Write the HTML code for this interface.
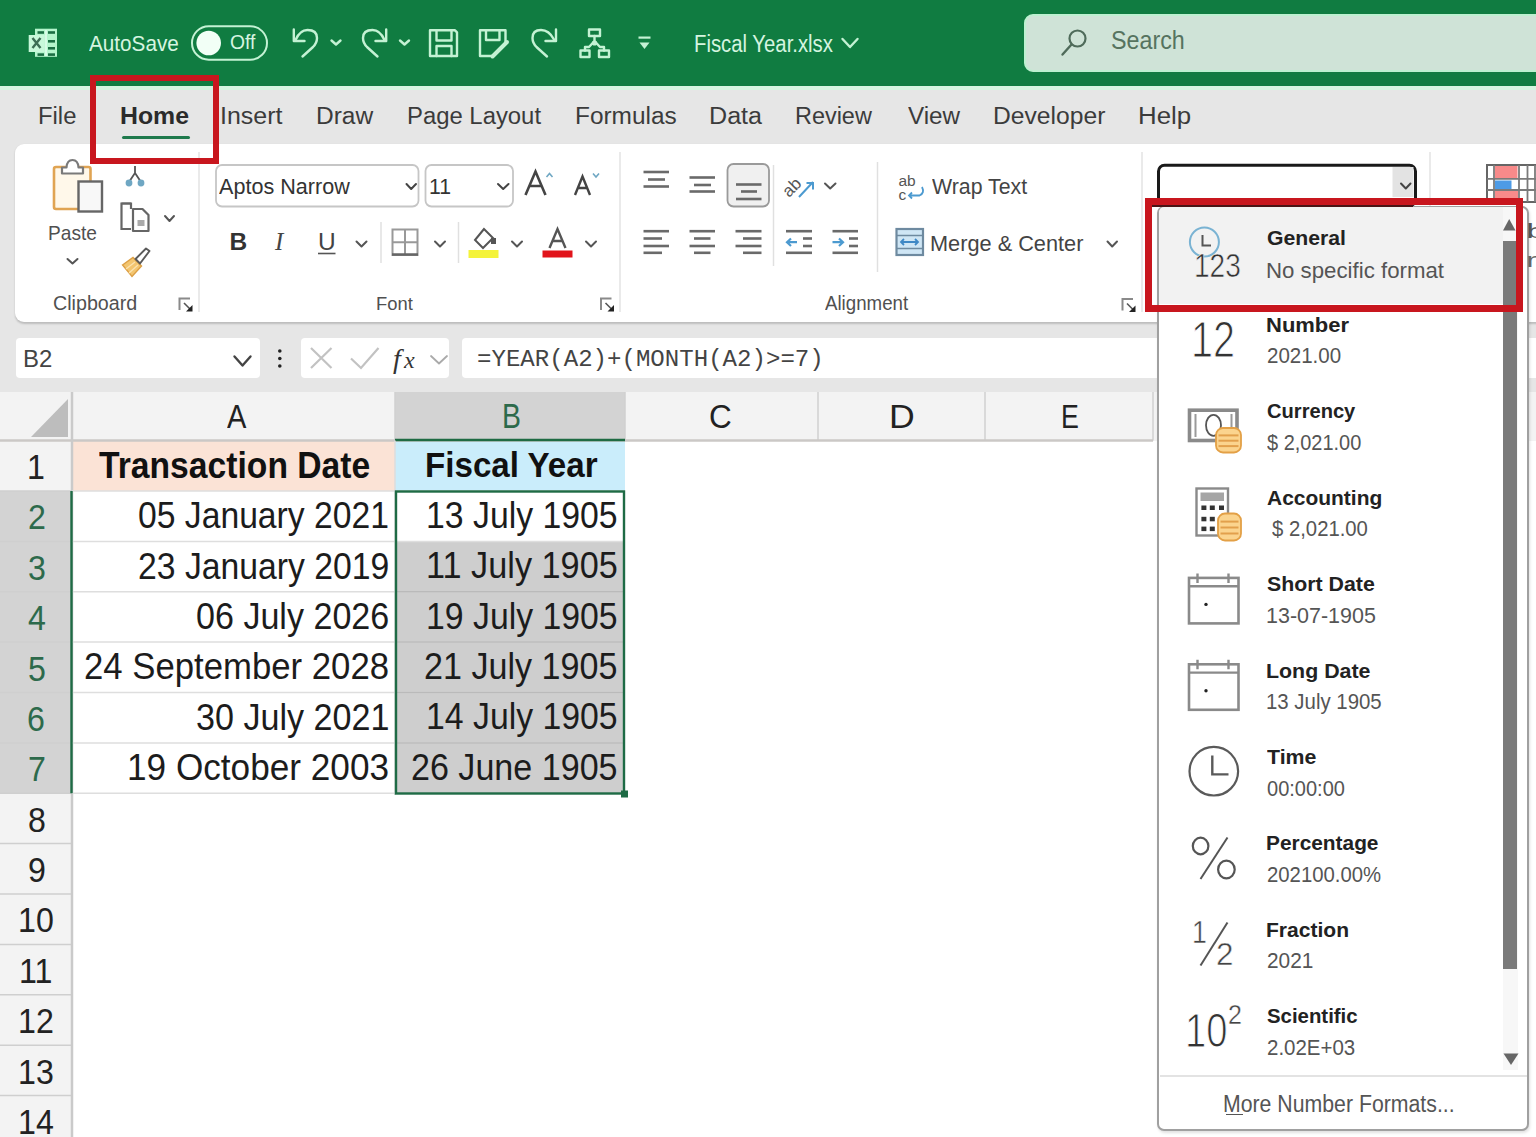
<!DOCTYPE html>
<html><head><meta charset="utf-8"><style>
html,body{margin:0;padding:0;width:1536px;height:1137px;overflow:hidden;background:#fff;font-family:'Liberation Sans',sans-serif}
.b{position:absolute;box-sizing:border-box}
.t{position:absolute;white-space:nowrap;transform-origin:0 0}
svg{position:absolute;overflow:visible}
</style></head><body>
<div class="b" style="left:0.0px;top:0.0px;width:1536.0px;height:86.0px;background:#107c41"></div>
<div class="b" style="left:0.0px;top:85.5px;width:1536.0px;height:4.0px;background:#d5f5e0"></div>
<div class="b" style="left:0.0px;top:89.5px;width:1536.0px;height:302.5px;background:#e6e6e6"></div>
<div class="b" style="left:15.0px;top:143.5px;width:1545.0px;height:178.5px;background:#fff;border-radius:9px;box-shadow:0 1.5px 2px rgba(0,0,0,.18)"></div>
<div class="b" style="left:1023.5px;top:13.5px;width:536.5px;height:58.5px;background:#cfe3d7;border:2.2px solid #bdf0d0;border-radius:9px"></div>
<div class="b" style="left:16.0px;top:338.0px;width:244.0px;height:39.5px;background:#fff;border-radius:4px"></div>
<div class="b" style="left:300.5px;top:338.0px;width:148.5px;height:39.5px;background:#fff;border-radius:4px"></div>
<div class="b" style="left:462.0px;top:338.0px;width:1098.0px;height:39.5px;background:#fff;border-radius:4px"></div>
<div class="b" style="left:0.0px;top:392.0px;width:1536.0px;height:48.5px;background:#f3f3f3"></div>
<div class="b" style="left:0.0px;top:440.5px;width:1536.0px;height:696.5px;background:#fff"></div>
<div class="b" style="left:0.0px;top:440.5px;width:72.0px;height:696.5px;background:#f3f3f3"></div>
<div class="b" style="left:0.0px;top:491.0px;width:71.0px;height:302.3px;background:#d3d3d3"></div>
<div class="b" style="left:395.0px;top:392.0px;width:230.0px;height:48.5px;background:#d3d3d3"></div>
<div class="b" style="left:72.0px;top:440.6px;width:323.0px;height:50.4px;background:#fbe3d6"></div>
<div class="b" style="left:395.0px;top:440.6px;width:230.0px;height:50.4px;background:#caedfb"></div>
<div class="b" style="left:395.0px;top:541.4px;width:230.0px;height:251.9px;background:#cecece"></div>
<svg width="1536" height="1137" viewBox="0 0 1536 1137" style="left:0;top:0"><line x1="72" y1="392" x2="72" y2="440.5" stroke="#d0d0d0" stroke-width="1.5"/><line x1="395" y1="392" x2="395" y2="440.5" stroke="#d0d0d0" stroke-width="1.5"/><line x1="625" y1="392" x2="625" y2="440.5" stroke="#d0d0d0" stroke-width="1.5"/><line x1="818" y1="392" x2="818" y2="440.5" stroke="#d0d0d0" stroke-width="1.5"/><line x1="985" y1="392" x2="985" y2="440.5" stroke="#d0d0d0" stroke-width="1.5"/><line x1="1153" y1="392" x2="1153" y2="440.5" stroke="#d0d0d0" stroke-width="1.5"/><line x1="0" y1="440.5" x2="1153" y2="440.5" stroke="#cbc8c6" stroke-width="2.5"/><line x1="395" y1="440" x2="625" y2="440" stroke="#1f6b43" stroke-width="2.5"/><line x1="0" y1="491.0" x2="72" y2="491.0" stroke="#cfcfcf" stroke-width="1.5"/><line x1="0" y1="541.4" x2="72" y2="541.4" stroke="#cfcfcf" stroke-width="1.5"/><line x1="0" y1="591.7" x2="72" y2="591.7" stroke="#cfcfcf" stroke-width="1.5"/><line x1="0" y1="642.1" x2="72" y2="642.1" stroke="#cfcfcf" stroke-width="1.5"/><line x1="0" y1="692.5" x2="72" y2="692.5" stroke="#cfcfcf" stroke-width="1.5"/><line x1="0" y1="742.9" x2="72" y2="742.9" stroke="#cfcfcf" stroke-width="1.5"/><line x1="0" y1="793.3" x2="72" y2="793.3" stroke="#cfcfcf" stroke-width="1.5"/><line x1="0" y1="843.6" x2="72" y2="843.6" stroke="#cfcfcf" stroke-width="1.5"/><line x1="0" y1="894.0" x2="72" y2="894.0" stroke="#cfcfcf" stroke-width="1.5"/><line x1="0" y1="944.4" x2="72" y2="944.4" stroke="#cfcfcf" stroke-width="1.5"/><line x1="0" y1="994.8" x2="72" y2="994.8" stroke="#cfcfcf" stroke-width="1.5"/><line x1="0" y1="1045.2" x2="72" y2="1045.2" stroke="#cfcfcf" stroke-width="1.5"/><line x1="0" y1="1095.5" x2="72" y2="1095.5" stroke="#cfcfcf" stroke-width="1.5"/><line x1="0" y1="1145.9" x2="72" y2="1145.9" stroke="#cfcfcf" stroke-width="1.5"/><line x1="72" y1="392" x2="72" y2="1137" stroke="#cacaca" stroke-width="2.5"/><line x1="72" y1="491.0" x2="625" y2="491.0" stroke="#dedede" stroke-width="1.5"/><line x1="72" y1="541.4" x2="625" y2="541.4" stroke="#dedede" stroke-width="1.5"/><line x1="72" y1="591.7" x2="625" y2="591.7" stroke="#dedede" stroke-width="1.5"/><line x1="72" y1="642.1" x2="625" y2="642.1" stroke="#dedede" stroke-width="1.5"/><line x1="72" y1="692.5" x2="625" y2="692.5" stroke="#dedede" stroke-width="1.5"/><line x1="72" y1="742.9" x2="625" y2="742.9" stroke="#dedede" stroke-width="1.5"/><line x1="72" y1="793.3" x2="625" y2="793.3" stroke="#dedede" stroke-width="1.5"/><line x1="395" y1="440.5" x2="395" y2="795" stroke="#dcdcdc" stroke-width="1.5"/><line x1="396" y1="591.7" x2="624" y2="591.7" stroke="#bababa" stroke-width="1.5"/><line x1="396" y1="642.1" x2="624" y2="642.1" stroke="#bababa" stroke-width="1.5"/><line x1="396" y1="692.5" x2="624" y2="692.5" stroke="#bababa" stroke-width="1.5"/><line x1="396" y1="742.9" x2="624" y2="742.9" stroke="#bababa" stroke-width="1.5"/><line x1="396" y1="793.3" x2="624" y2="793.3" stroke="#bababa" stroke-width="1.5"/><rect x="396" y="491.5" width="228" height="302" fill="none" stroke="#1e6b45" stroke-width="2.4"/><rect x="621" y="790.5" width="7" height="7" fill="#1e6b45"/><line x1="71.5" y1="491.0" x2="71.5" y2="793.3" stroke="#1e6b45" stroke-width="2.4"/><polygon points="68,399 68,437 31,437" fill="#bdbdbd"/></svg>
<svg width="1536" height="1137" viewBox="0 0 1536 1137" style="left:0;top:0"><rect x="35" y="28.7" width="22" height="28.1" fill="#b4f5cc"/><rect x="37.5" y="31.2" width="6.5" height="2.6" fill="#1b6e43"/><rect x="48" y="31.2" width="7" height="2.6" fill="#1b6e43"/><rect x="37.5" y="40" width="6.5" height="2.6" fill="#1b6e43"/><rect x="48" y="40" width="7" height="2.6" fill="#1b6e43"/><rect x="37.5" y="47" width="6.5" height="2.6" fill="#1b6e43"/><rect x="48" y="47" width="7" height="2.6" fill="#1b6e43"/><rect x="37.5" y="53.3" width="6.5" height="2.6" fill="#1b6e43"/><rect x="48" y="53.3" width="7" height="2.6" fill="#1b6e43"/><rect x="45" y="30" width="2" height="26" fill="#d8fbe6"/><rect x="28.7" y="35" width="16" height="17" fill="#c8f8da"/><path d="M32.5,38 L40.5,48 M40.5,38 L32.5,48" stroke="#3d6e55" stroke-width="2.4"/><rect x="192" y="26.2" width="75" height="33.5" rx="16.75" fill="none" stroke="#c4f2d4" stroke-width="2"/><circle cx="208.7" cy="43" r="12.3" fill="#f2fff6"/><path d="M293.8,29.5 V41 H304.5" fill="none" stroke="#c4f2d4" stroke-width="2.4" stroke-linecap="round" stroke-linejoin="round"/><path d="M295.5,40 Q300,30 307.5,30 Q317,30 317,38 Q317,43 313,47 L302.5,56.5" fill="none" stroke="#c4f2d4" stroke-width="2.4" stroke-linecap="round" stroke-linejoin="round"/><path d="M331.5,40.5 L336,44.5 L340.5,40.5" fill="none" stroke="#c4f2d4" stroke-width="2.4" stroke-linecap="round" stroke-linejoin="round" stroke-width="2"/><path d="M386.2,29.5 V41 H375.5" fill="none" stroke="#c4f2d4" stroke-width="2.4" stroke-linecap="round" stroke-linejoin="round"/><path d="M384.5,40 Q380,30 372.5,30 Q363,30 363,38 Q363,43 367,47 L377.5,56.5" fill="none" stroke="#c4f2d4" stroke-width="2.4" stroke-linecap="round" stroke-linejoin="round"/><path d="M400,40.5 L404.5,44.5 L409,40.5" fill="none" stroke="#c4f2d4" stroke-width="2.4" stroke-linecap="round" stroke-linejoin="round" stroke-width="2"/><path d="M430,30.3 H455 L457,32.3 V56 H430 Z" fill="none" stroke="#c4f2d4" stroke-width="2.4" stroke-linecap="round" stroke-linejoin="round"/><path d="M436.5,30.3 V40.5 H451.5 V30.3 M436.5,56 V46 H451.5 V56" fill="none" stroke="#c4f2d4" stroke-width="2.4" stroke-linecap="round" stroke-linejoin="round"/><path d="M493,56 H480 V30.3 H505.5 V42" fill="none" stroke="#c4f2d4" stroke-width="2.4" stroke-linecap="round" stroke-linejoin="round"/><path d="M486,30.3 V40 H499.5 V30.3" fill="none" stroke="#c4f2d4" stroke-width="2.4" stroke-linecap="round" stroke-linejoin="round"/><path d="M492.5,56.5 L507,42" stroke="#c4f2d4" stroke-width="4" stroke-linecap="round"/><path d="M556,29.5 V41 H545.5" fill="none" stroke="#c4f2d4" stroke-width="2.4" stroke-linecap="round" stroke-linejoin="round"/><path d="M554,39.5 Q549,30 541,30 Q532.5,30 532.5,38 Q532.5,43 536.5,47 L547,56.5" fill="none" stroke="#c4f2d4" stroke-width="2.4" stroke-linecap="round" stroke-linejoin="round"/><rect x="589" y="29.5" width="11" height="6.5" fill="none" stroke="#c4f2d4" stroke-width="2.4" stroke-linecap="round" stroke-linejoin="round" stroke-width="2.2"/><rect x="580.5" y="50.5" width="9" height="6.5" fill="none" stroke="#c4f2d4" stroke-width="2.4" stroke-linecap="round" stroke-linejoin="round" stroke-width="2.2"/><rect x="599" y="50.5" width="10" height="6.5" fill="none" stroke="#c4f2d4" stroke-width="2.4" stroke-linecap="round" stroke-linejoin="round" stroke-width="2.2"/><path d="M594.5,36 V41 M594.5,41 L589,47 H585 V50.5 M594.5,41 L600,47 H604 V50.5" fill="none" stroke="#c4f2d4" stroke-width="2.4" stroke-linecap="round" stroke-linejoin="round" stroke-width="2.2"/><circle cx="594.5" cy="43" r="2.6" fill="#c4f2d4"/><path d="M638.5,37.6 H650.5" stroke="#c4f2d4" stroke-width="2.2"/><path d="M639.5,42.5 L644.5,49 L649.5,42.5 Z" fill="#c4f2d4"/><path d="M842.5,39 L850,47 L857.5,39" fill="none" stroke="#c4f2d4" stroke-width="2.4" stroke-linecap="round" stroke-linejoin="round" stroke-width="2.2"/><circle cx="1077.5" cy="38.5" r="8" fill="none" stroke="#4f6b5a" stroke-width="2.2"/><path d="M1071.5,44.5 L1062.5,54.5" stroke="#4f6b5a" stroke-width="2.4" stroke-linecap="round"/><line x1="199" y1="152" x2="199" y2="312" stroke="#e3e3e3" stroke-width="1.5"/><line x1="620" y1="152" x2="620" y2="312" stroke="#e3e3e3" stroke-width="1.5"/><line x1="1142" y1="152" x2="1142" y2="312" stroke="#e3e3e3" stroke-width="1.5"/><line x1="1430" y1="152" x2="1430" y2="312" stroke="#e3e3e3" stroke-width="1.5"/><line x1="381" y1="222" x2="381" y2="263" stroke="#e0e0e0" stroke-width="1.5"/><line x1="458.5" y1="222" x2="458.5" y2="263" stroke="#e0e0e0" stroke-width="1.5"/><line x1="773.5" y1="165" x2="773.5" y2="266" stroke="#e0e0e0" stroke-width="1.5"/><line x1="877.5" y1="162" x2="877.5" y2="272" stroke="#e0e0e0" stroke-width="1.5"/><rect x="54" y="167" width="36.5" height="42" rx="2" fill="#fff8ea" stroke="#e0a453" stroke-width="2.6"/><path d="M62,173.5 V167.5 H66.5 Q67,160 72.5,160 Q78,160 78.5,167.5 H83 V173.5 Z" fill="#fff" stroke="#7a7a7a" stroke-width="2.2" stroke-linejoin="round"/><rect x="78.5" y="181.5" width="23.5" height="30" fill="#f8f8f8" stroke="#666" stroke-width="2.4"/><path d="M67.5,259.0 L72.5,263.5 L77.5,259.0" fill="none" stroke="#555" stroke-width="2" stroke-linecap="round" stroke-linejoin="round"/><path d="M135,166 V173 L129,182 M135,173 L141,182" stroke="#555" stroke-width="1.8" fill="none"/><circle cx="129" cy="183" r="3.4" fill="#6fa7c3"/><circle cx="141" cy="183" r="3.4" fill="#6fa7c3"/><path d="M131,229 H121.5 V203.5 H131" fill="none" stroke="#666" stroke-width="2.2"/><path d="M121.5,203.5 H131 V209" fill="none" stroke="#666" stroke-width="2.2"/><path d="M133,209 H142.5 L148.5,215 V231 H133 Z" fill="#fff" stroke="#666" stroke-width="2.2" stroke-linejoin="round"/><rect x="137.5" y="220" width="7" height="6" fill="#aaa"/><path d="M165.0,216.0 L169.5,221.0 L174.0,216.0" fill="none" stroke="#555" stroke-width="2" stroke-linecap="round" stroke-linejoin="round"/><path d="M122.5,265 L133,257.5 L141.5,266 L132,276.5 Z" fill="#f3c56f" stroke="#dc9f45" stroke-width="1.4"/><path d="M126,269 L135,262 M129,273 L138,265" stroke="#fbe3b0" stroke-width="1.3"/><path d="M135.5,259 L140,263.5 L149.5,251 L146,248.5 Z" fill="#fff" stroke="#5a5a5a" stroke-width="1.9" stroke-linejoin="round"/><path d="M179.5,310.0 V298.5 H190.0" stroke="#8a8a8a" stroke-width="2" fill="none"/><path d="M184.0,303.0 L190.5,309.5" stroke="#555" stroke-width="1.6" fill="none"/><path d="M186.0,311.5 H192.5 V305.0 Z" fill="#222"/><rect x="216" y="165" width="202.5" height="41.5" rx="6" fill="#fff" stroke="#c6c6c6" stroke-width="1.8"/><path d="M406.5,184.0 L411.2,189.0 L416.0,184.0" fill="none" stroke="#444" stroke-width="2" stroke-linecap="round" stroke-linejoin="round"/><rect x="425.5" y="165" width="87.5" height="41.5" rx="6" fill="#fff" stroke="#c6c6c6" stroke-width="1.8"/><path d="M498.0,184.0 L503.2,189.0 L508.5,184.0" fill="none" stroke="#444" stroke-width="2" stroke-linecap="round" stroke-linejoin="round"/><path d="M525.5,195 L535.5,171.5 L545.5,195 M529.5,186 H541.5" fill="none" stroke="#444" stroke-width="2.6"/><path d="M546.5,177 L549.5,173.5 L552.5,177" fill="none" stroke="#6fa7c3" stroke-width="1.6"/><path d="M575,195 L582.5,176.5 L590,195 M578,188 H587" fill="none" stroke="#444" stroke-width="2.4"/><path d="M593,173.5 L596,177 L599,173.5" fill="none" stroke="#6fa7c3" stroke-width="1.6"/><text x="229.5" y="249.5" font-family="Liberation Sans" font-weight="700" font-size="24.5" fill="#333">B</text><text x="275" y="249.5" font-family="Liberation Serif" font-style="italic" font-size="25" fill="#444">I</text><text x="318" y="249.5" font-family="Liberation Sans" font-size="24.5" fill="#444">U</text><line x1="318" y1="253.5" x2="335.5" y2="253.5" stroke="#555" stroke-width="1.6"/><path d="M356.5,241.5 L361.5,246.5 L366.5,241.5" fill="none" stroke="#555" stroke-width="2" stroke-linecap="round" stroke-linejoin="round"/><rect x="392.5" y="229.5" width="25" height="25.5" fill="none" stroke="#999" stroke-width="2"/><path d="M405,229.5 V255 M392.5,242.2 H417.5" stroke="#999" stroke-width="2"/><line x1="392" y1="254.5" x2="418" y2="254.5" stroke="#666" stroke-width="2.5"/><path d="M435.0,241.5 L440.0,246.5 L445.0,241.5" fill="none" stroke="#555" stroke-width="2" stroke-linecap="round" stroke-linejoin="round"/><path d="M484,229 L475,240 L483,248 L493,238 Z" fill="#fff" stroke="#555" stroke-width="2"/><rect x="491" y="238" width="5" height="6" fill="#555"/><rect x="468.5" y="250" width="30" height="8" fill="#f4f33a"/><path d="M512.0,241.5 L517.0,246.5 L522.0,241.5" fill="none" stroke="#555" stroke-width="2" stroke-linecap="round" stroke-linejoin="round"/><path d="M549.5,248 L557.5,229 L565.5,248 M552.5,241 H562.5" fill="none" stroke="#555" stroke-width="2.4"/><rect x="542.5" y="250.5" width="30" height="7" fill="#e1141b"/><path d="M586.0,241.5 L591.0,246.5 L596.0,241.5" fill="none" stroke="#555" stroke-width="2" stroke-linecap="round" stroke-linejoin="round"/><path d="M601.0,310.0 V298.5 H611.5" stroke="#8a8a8a" stroke-width="2" fill="none"/><path d="M605.5,303.0 L612.0,309.5" stroke="#555" stroke-width="1.6" fill="none"/><path d="M607.5,311.5 H614.0 V305.0 Z" fill="#222"/><line x1="643.5" y1="172.0" x2="669.0" y2="172.0" stroke="#6a6a6a" stroke-width="2.6"/><line x1="648.0" y1="179.5" x2="665.0" y2="179.5" stroke="#6a6a6a" stroke-width="2.6"/><line x1="643.5" y1="186.5" x2="669.0" y2="186.5" stroke="#6a6a6a" stroke-width="2.6"/><line x1="689.5" y1="177.5" x2="715.0" y2="177.5" stroke="#6a6a6a" stroke-width="2.6"/><line x1="694.0" y1="185.0" x2="711.0" y2="185.0" stroke="#6a6a6a" stroke-width="2.6"/><line x1="689.5" y1="191.5" x2="715.0" y2="191.5" stroke="#6a6a6a" stroke-width="2.6"/><rect x="727.5" y="164" width="41.5" height="42.5" rx="6" fill="#f0f0f0" stroke="#9a9a9a" stroke-width="1.8"/><line x1="736.0" y1="184.5" x2="761.5" y2="184.5" stroke="#6a6a6a" stroke-width="2.6"/><line x1="741.0" y1="191.5" x2="757.0" y2="191.5" stroke="#6a6a6a" stroke-width="2.6"/><line x1="736.0" y1="199.0" x2="761.5" y2="199.0" stroke="#6a6a6a" stroke-width="2.6"/><line x1="643.5" y1="231.2" x2="669.0" y2="231.2" stroke="#6a6a6a" stroke-width="2.6"/><line x1="643.5" y1="238.5" x2="662.0" y2="238.5" stroke="#6a6a6a" stroke-width="2.6"/><line x1="643.5" y1="246.0" x2="669.0" y2="246.0" stroke="#6a6a6a" stroke-width="2.6"/><line x1="643.5" y1="252.8" x2="662.0" y2="252.8" stroke="#6a6a6a" stroke-width="2.6"/><line x1="689.5" y1="231.2" x2="715.0" y2="231.2" stroke="#6a6a6a" stroke-width="2.6"/><line x1="694.0" y1="238.5" x2="710.5" y2="238.5" stroke="#6a6a6a" stroke-width="2.6"/><line x1="689.5" y1="246.0" x2="715.0" y2="246.0" stroke="#6a6a6a" stroke-width="2.6"/><line x1="694.0" y1="252.8" x2="710.5" y2="252.8" stroke="#6a6a6a" stroke-width="2.6"/><line x1="735.5" y1="231.2" x2="761.5" y2="231.2" stroke="#6a6a6a" stroke-width="2.6"/><line x1="743.0" y1="238.5" x2="761.5" y2="238.5" stroke="#6a6a6a" stroke-width="2.6"/><line x1="735.5" y1="246.0" x2="761.5" y2="246.0" stroke="#6a6a6a" stroke-width="2.6"/><line x1="743.0" y1="252.8" x2="761.5" y2="252.8" stroke="#6a6a6a" stroke-width="2.6"/><line x1="786.0" y1="231.2" x2="812.0" y2="231.2" stroke="#6a6a6a" stroke-width="2.6"/><line x1="803.0" y1="238.5" x2="812.0" y2="238.5" stroke="#6a6a6a" stroke-width="2.6"/><line x1="803.0" y1="246.0" x2="812.0" y2="246.0" stroke="#6a6a6a" stroke-width="2.6"/><line x1="786.0" y1="252.8" x2="812.0" y2="252.8" stroke="#6a6a6a" stroke-width="2.6"/><path d="M787,242.2 H797 M791,238.5 L787,242.2 L791,246" stroke="#4c9ad0" stroke-width="2.2" fill="none"/><line x1="832.5" y1="231.2" x2="858.0" y2="231.2" stroke="#6a6a6a" stroke-width="2.6"/><line x1="849.0" y1="238.5" x2="858.0" y2="238.5" stroke="#6a6a6a" stroke-width="2.6"/><line x1="849.0" y1="246.0" x2="858.0" y2="246.0" stroke="#6a6a6a" stroke-width="2.6"/><line x1="832.5" y1="252.8" x2="858.0" y2="252.8" stroke="#6a6a6a" stroke-width="2.6"/><path d="M832.5,242.2 H843 M839,238.5 L843,242.2 L839,246" stroke="#4c9ad0" stroke-width="2.2" fill="none"/><text x="0" y="0" transform="translate(789,198) rotate(-45)" font-family="Liberation Sans" font-size="17" fill="#555">ab</text><path d="M799,197 L813,182 M806.5,183 H813 V189.5" stroke="#4c9ad0" stroke-width="2" fill="none"/><path d="M825.0,183.5 L830.2,188.5 L835.5,183.5" fill="none" stroke="#555" stroke-width="2" stroke-linecap="round" stroke-linejoin="round"/><text x="898.5" y="186" font-family="Liberation Sans" font-size="15.5" fill="#555">ab</text><text x="898.5" y="199.5" font-family="Liberation Sans" font-size="15.5" fill="#555">c</text><path d="M922,187 Q925,193 919.5,195.5 H909 M912,192.5 L909,195.5 L912,198.5" stroke="#4c9ad0" stroke-width="1.8" fill="none"/><rect x="896.5" y="229" width="26.5" height="26" fill="#cfe6f5" stroke="#6e8aa0" stroke-width="2.2"/><path d="M896.5,235.5 H923 M896.5,248.5 H923" stroke="#6e8aa0" stroke-width="1.6"/><path d="M901,242 H918 M904,239 L901,242 L904,245 M915,239 L918,242 L915,245" stroke="#3f88c5" stroke-width="1.8" fill="none"/><path d="M1107.5,241.5 L1112.2,246.5 L1117.0,241.5" fill="none" stroke="#555" stroke-width="2" stroke-linecap="round" stroke-linejoin="round"/><path d="M1122.5,310.5 V299.0 H1133.0" stroke="#8a8a8a" stroke-width="2" fill="none"/><path d="M1127.0,303.5 L1133.5,310.0" stroke="#555" stroke-width="1.6" fill="none"/><path d="M1129.0,312.0 H1135.5 V305.5 Z" fill="#222"/><rect x="1158.5" y="165.2" width="257" height="40.5" rx="6" fill="#fff" stroke="#1a1a1a" stroke-width="3"/><rect x="1392.5" y="167" width="21" height="30" fill="#e3e3e3"/><path d="M1401.0,183.5 L1405.8,188.5 L1410.5,183.5" fill="none" stroke="#444" stroke-width="2" stroke-linecap="round" stroke-linejoin="round"/><rect x="1487" y="165" width="60" height="37" fill="#fff" stroke="#666" stroke-width="2"/><rect x="1495" y="166" width="22.5" height="12.5" fill="#f88a8a"/><rect x="1495" y="180.5" width="16.5" height="9" fill="#4d9be6"/><rect x="1495" y="191" width="23" height="11" fill="#f88a8a"/><path d="M1487,178.8 H1536 M1487,190 H1536 M1494,165 V202 M1519,165 V202 M1527.5,165 V202 M1535,165 V202" stroke="#7a7a7a" stroke-width="1.8"/><path d="M234.5,356.5 L242.5,365.5 L250.5,356.5" fill="none" stroke="#444" stroke-width="2.4" stroke-linecap="round" stroke-linejoin="round"/><circle cx="279.8" cy="351" r="1.8" fill="#222"/><circle cx="279.8" cy="358.5" r="1.8" fill="#222"/><circle cx="279.8" cy="366" r="1.8" fill="#222"/><path d="M311,348 L331.5,368 M331.5,348 L311,368" stroke="#c2c2c2" stroke-width="2.2"/><path d="M351,358.5 L361,368 L378.5,348" stroke="#c2c2c2" stroke-width="2.2" fill="none"/><text x="393" y="368" font-family="Liberation Serif" font-style="italic" font-size="28" fill="#333">f</text><text x="404" y="368" font-family="Liberation Serif" font-style="italic" font-size="24" fill="#333">x</text><path d="M431.0,356.0 L439.0,363.5 L447.0,356.0" fill="none" stroke="#aaa" stroke-width="1.8" stroke-linecap="round" stroke-linejoin="round"/></svg>
<div class="t" style="left:88.50px;top:32.75px;font-size:22.03px;line-height:22.03px;font-family:'Liberation Sans', sans-serif;font-weight:400;color:#d6f5e0;transform:scaleX(0.9407);">AutoSave</div>
<div class="t" style="left:229.83px;top:32.89px;font-size:19.86px;line-height:19.86px;font-family:'Liberation Sans', sans-serif;font-weight:400;color:#d6f5e0;transform:scaleX(0.9716);">Off</div>
<div class="t" style="left:693.57px;top:31.67px;font-size:24.49px;line-height:24.49px;font-family:'Liberation Sans', sans-serif;font-weight:400;color:#d6f5e0;transform:scaleX(0.8299);">Fiscal Year.xlsx</div>
<div class="t" style="left:1110.55px;top:28.23px;font-size:25.71px;line-height:25.71px;font-family:'Liberation Sans', sans-serif;font-weight:400;color:#56735f;transform:scaleX(0.9051);">Search</div>
<div class="t" style="left:37.69px;top:103.67px;font-size:24.49px;line-height:24.49px;font-family:'Liberation Sans', sans-serif;font-weight:400;color:#3b3b3b;transform:scaleX(0.9733);">File</div>
<div class="t" style="left:219.75px;top:103.67px;font-size:24.49px;line-height:24.49px;font-family:'Liberation Sans', sans-serif;font-weight:400;color:#3b3b3b;transform:scaleX(1.0186);">Insert</div>
<div class="t" style="left:315.54px;top:103.67px;font-size:24.49px;line-height:24.49px;font-family:'Liberation Sans', sans-serif;font-weight:400;color:#3b3b3b;transform:scaleX(1.0012);">Draw</div>
<div class="t" style="left:407.09px;top:103.67px;font-size:24.49px;line-height:24.49px;font-family:'Liberation Sans', sans-serif;font-weight:400;color:#3b3b3b;transform:scaleX(0.9746);">Page Layout</div>
<div class="t" style="left:575.05px;top:103.67px;font-size:24.49px;line-height:24.49px;font-family:'Liberation Sans', sans-serif;font-weight:400;color:#3b3b3b;transform:scaleX(0.9968);">Formulas</div>
<div class="t" style="left:708.99px;top:103.67px;font-size:24.49px;line-height:24.49px;font-family:'Liberation Sans', sans-serif;font-weight:400;color:#3b3b3b;transform:scaleX(1.0257);">Data</div>
<div class="t" style="left:795.12px;top:103.67px;font-size:24.49px;line-height:24.49px;font-family:'Liberation Sans', sans-serif;font-weight:400;color:#3b3b3b;transform:scaleX(0.9569);">Review</div>
<div class="t" style="left:907.88px;top:103.67px;font-size:24.49px;line-height:24.49px;font-family:'Liberation Sans', sans-serif;font-weight:400;color:#3b3b3b;transform:scaleX(0.9898);">View</div>
<div class="t" style="left:993.03px;top:103.67px;font-size:24.49px;line-height:24.49px;font-family:'Liberation Sans', sans-serif;font-weight:400;color:#3b3b3b;transform:scaleX(1.0070);">Developer</div>
<div class="t" style="left:1137.93px;top:103.67px;font-size:24.49px;line-height:24.49px;font-family:'Liberation Sans', sans-serif;font-weight:400;color:#3b3b3b;transform:scaleX(1.0550);">Help</div>
<div class="t" style="left:120.38px;top:103.62px;font-size:24.78px;line-height:24.78px;font-family:'Liberation Sans', sans-serif;font-weight:700;color:#2b2b2b;transform:scaleX(1.0031);">Home</div>
<div class="t" style="left:48.47px;top:223.96px;font-size:19.42px;line-height:19.42px;font-family:'Liberation Sans', sans-serif;font-weight:400;color:#505050;transform:scaleX(0.9854);">Paste</div>
<div class="t" style="left:53.02px;top:294.37px;font-size:19.29px;line-height:19.29px;font-family:'Liberation Sans', sans-serif;font-weight:400;color:#505050;transform:scaleX(1.0209);">Clipboard</div>
<div class="t" style="left:219.40px;top:175.60px;font-size:21.74px;line-height:21.74px;font-family:'Liberation Sans', sans-serif;font-weight:400;color:#333;transform:scaleX(0.9936);">Aptos Narrow</div>
<div class="t" style="left:429.41px;top:175.60px;font-size:21.74px;line-height:21.74px;font-family:'Liberation Sans', sans-serif;font-weight:400;color:#333;transform:scaleX(0.9753);">11</div>
<div class="t" style="left:375.73px;top:295.10px;font-size:18.55px;line-height:18.55px;font-family:'Liberation Sans', sans-serif;font-weight:400;color:#505050;transform:scaleX(0.9909);">Font</div>
<div class="t" style="left:825.00px;top:294.44px;font-size:19.57px;line-height:19.57px;font-family:'Liberation Sans', sans-serif;font-weight:400;color:#505050;transform:scaleX(0.9555);">Alignment</div>
<div class="t" style="left:931.89px;top:175.68px;font-size:22.46px;line-height:22.46px;font-family:'Liberation Sans', sans-serif;font-weight:400;color:#444;transform:scaleX(0.9483);">Wrap Text</div>
<div class="t" style="left:930.26px;top:233.11px;font-size:22.32px;line-height:22.32px;font-family:'Liberation Sans', sans-serif;font-weight:400;color:#444;transform:scaleX(0.9740);">Merge &amp; Center</div>
<div class="t" style="left:23.38px;top:346.68px;font-size:23.77px;line-height:23.77px;font-family:'Liberation Sans', sans-serif;font-weight:400;color:#444;transform:scaleX(1.0074);">B2</div>
<div class="t" style="left:477.18px;top:348.42px;font-size:24.24px;line-height:24.24px;font-family:'Liberation Mono', monospace;font-weight:400;color:#444;transform:scaleX(0.9934);">=YEAR(A2)+(MONTH(A2)&gt;=7)</div>
<div class="t" style="left:226.70px;top:399.17px;font-size:34.06px;line-height:34.06px;font-family:'Liberation Sans', sans-serif;font-weight:400;color:#222;transform:scaleX(0.8522);">A</div>
<div class="t" style="left:502.13px;top:399.06px;font-size:34.78px;line-height:34.78px;font-family:'Liberation Sans', sans-serif;font-weight:400;color:#2d6a4b;transform:scaleX(0.8168);">B</div>
<div class="t" style="left:709.43px;top:399.58px;font-size:33.57px;line-height:33.57px;font-family:'Liberation Sans', sans-serif;font-weight:400;color:#222;transform:scaleX(0.9382);">C</div>
<div class="t" style="left:888.75px;top:399.17px;font-size:34.06px;line-height:34.06px;font-family:'Liberation Sans', sans-serif;font-weight:400;color:#222;transform:scaleX(1.0462);">D</div>
<div class="t" style="left:1060.86px;top:399.17px;font-size:34.06px;line-height:34.06px;font-family:'Liberation Sans', sans-serif;font-weight:400;color:#222;transform:scaleX(0.7866);">E</div>
<div class="t" style="left:27.09px;top:449.07px;font-size:35.36px;line-height:35.36px;font-family:'Liberation Sans', sans-serif;font-weight:400;color:#222;transform:scaleX(0.9095);">1</div>
<div class="t" style="left:27.58px;top:499.45px;font-size:35.36px;line-height:35.36px;font-family:'Liberation Sans', sans-serif;font-weight:400;color:#2d6a4b;transform:scaleX(0.9095);">2</div>
<div class="t" style="left:27.58px;top:549.83px;font-size:35.36px;line-height:35.36px;font-family:'Liberation Sans', sans-serif;font-weight:400;color:#2d6a4b;transform:scaleX(0.9095);">3</div>
<div class="t" style="left:27.74px;top:600.21px;font-size:35.36px;line-height:35.36px;font-family:'Liberation Sans', sans-serif;font-weight:400;color:#2d6a4b;transform:scaleX(0.9095);">4</div>
<div class="t" style="left:27.58px;top:650.59px;font-size:35.36px;line-height:35.36px;font-family:'Liberation Sans', sans-serif;font-weight:400;color:#2d6a4b;transform:scaleX(0.9095);">5</div>
<div class="t" style="left:27.41px;top:700.97px;font-size:35.36px;line-height:35.36px;font-family:'Liberation Sans', sans-serif;font-weight:400;color:#2d6a4b;transform:scaleX(0.9095);">6</div>
<div class="t" style="left:27.58px;top:751.35px;font-size:35.36px;line-height:35.36px;font-family:'Liberation Sans', sans-serif;font-weight:400;color:#2d6a4b;transform:scaleX(0.9095);">7</div>
<div class="t" style="left:27.50px;top:801.73px;font-size:35.36px;line-height:35.36px;font-family:'Liberation Sans', sans-serif;font-weight:400;color:#222;transform:scaleX(0.9095);">8</div>
<div class="t" style="left:27.58px;top:852.11px;font-size:35.36px;line-height:35.36px;font-family:'Liberation Sans', sans-serif;font-weight:400;color:#222;transform:scaleX(0.9095);">9</div>
<div class="t" style="left:18.01px;top:902.49px;font-size:35.36px;line-height:35.36px;font-family:'Liberation Sans', sans-serif;font-weight:400;color:#222;transform:scaleX(0.9095);">10</div>
<div class="t" style="left:19.37px;top:952.87px;font-size:35.36px;line-height:35.36px;font-family:'Liberation Sans', sans-serif;font-weight:400;color:#222;transform:scaleX(0.9095);">11</div>
<div class="t" style="left:18.25px;top:1003.25px;font-size:35.36px;line-height:35.36px;font-family:'Liberation Sans', sans-serif;font-weight:400;color:#222;transform:scaleX(0.9095);">12</div>
<div class="t" style="left:18.09px;top:1053.63px;font-size:35.36px;line-height:35.36px;font-family:'Liberation Sans', sans-serif;font-weight:400;color:#222;transform:scaleX(0.9095);">13</div>
<div class="t" style="left:17.93px;top:1104.01px;font-size:35.36px;line-height:35.36px;font-family:'Liberation Sans', sans-serif;font-weight:400;color:#222;transform:scaleX(0.9095);">14</div>
<div class="t" style="left:98.66px;top:447.17px;font-size:37.25px;line-height:37.25px;font-family:'Liberation Sans', sans-serif;font-weight:700;color:#111;transform:scaleX(0.9037);">Transaction Date</div>
<div class="t" style="left:425.24px;top:448.04px;font-size:35.51px;line-height:35.51px;font-family:'Liberation Sans', sans-serif;font-weight:700;color:#111;transform:scaleX(0.9338);">Fiscal Year</div>
<div class="t" style="left:138.05px;top:498.21px;font-size:36.14px;line-height:36.14px;font-family:'Liberation Sans', sans-serif;font-weight:400;color:#1c1c1c;transform:scaleX(0.9324);">05 January 2021</div>
<div class="t" style="left:425.66px;top:497.76px;font-size:36.67px;line-height:36.67px;font-family:'Liberation Sans', sans-serif;font-weight:400;color:#1c1c1c;transform:scaleX(0.9220);">13 July 1905</div>
<div class="t" style="left:137.71px;top:548.59px;font-size:36.14px;line-height:36.14px;font-family:'Liberation Sans', sans-serif;font-weight:400;color:#1c1c1c;transform:scaleX(0.9337);">23 January 2019</div>
<div class="t" style="left:425.63px;top:548.14px;font-size:36.67px;line-height:36.67px;font-family:'Liberation Sans', sans-serif;font-weight:400;color:#1c1c1c;transform:scaleX(0.9346);">11 July 1905</div>
<div class="t" style="left:195.64px;top:598.97px;font-size:36.14px;line-height:36.14px;font-family:'Liberation Sans', sans-serif;font-weight:400;color:#1c1c1c;transform:scaleX(0.9434);">06 July 2026</div>
<div class="t" style="left:425.66px;top:598.52px;font-size:36.67px;line-height:36.67px;font-family:'Liberation Sans', sans-serif;font-weight:400;color:#1c1c1c;transform:scaleX(0.9220);">19 July 1905</div>
<div class="t" style="left:83.76px;top:649.35px;font-size:36.14px;line-height:36.14px;font-family:'Liberation Sans', sans-serif;font-weight:400;color:#1c1c1c;transform:scaleX(0.9613);">24 September 2028</div>
<div class="t" style="left:423.79px;top:648.90px;font-size:36.67px;line-height:36.67px;font-family:'Liberation Sans', sans-serif;font-weight:400;color:#1c1c1c;transform:scaleX(0.9311);">21 July 1905</div>
<div class="t" style="left:195.63px;top:699.73px;font-size:36.14px;line-height:36.14px;font-family:'Liberation Sans', sans-serif;font-weight:400;color:#1c1c1c;transform:scaleX(0.9442);">30 July 2021</div>
<div class="t" style="left:425.66px;top:699.28px;font-size:36.67px;line-height:36.67px;font-family:'Liberation Sans', sans-serif;font-weight:400;color:#1c1c1c;transform:scaleX(0.9220);">14 July 1905</div>
<div class="t" style="left:126.86px;top:750.11px;font-size:36.14px;line-height:36.14px;font-family:'Liberation Sans', sans-serif;font-weight:400;color:#1c1c1c;transform:scaleX(0.9736);">19 October 2003</div>
<div class="t" style="left:410.80px;top:749.66px;font-size:36.67px;line-height:36.67px;font-family:'Liberation Sans', sans-serif;font-weight:400;color:#1c1c1c;transform:scaleX(0.9296);">26 June 1905</div>
<div class="b" style="left:1156.5px;top:205.5px;width:372.5px;height:925.5px;background:#fff;border:2px solid #a0a0a0;border-radius:7px;box-shadow:1px 2px 3px rgba(0,0,0,.12)"></div>
<div class="b" style="left:1158.5px;top:207.0px;width:344.5px;height:97.0px;background:#f2f2f2;border-radius:5px 0 0 0"></div>
<div class="b" style="left:1503.0px;top:207.0px;width:15.0px;height:863.0px;background:#f7f7f7"></div>
<div class="b" style="left:1503.0px;top:240.5px;width:14.0px;height:728.0px;background:#7a7a7a"></div>
<div class="b" style="left:1160.0px;top:1075.0px;width:367.0px;height:2.0px;background:#e3e3e3"></div>
<div class="t" style="left:1266.75px;top:228.42px;font-size:20.29px;line-height:20.29px;font-family:'Liberation Sans', sans-serif;font-weight:700;color:#222;transform:scaleX(1.0457);">General</div>
<div class="t" style="left:1265.82px;top:258.72px;font-size:22.90px;line-height:22.90px;font-family:'Liberation Sans', sans-serif;font-weight:400;color:#555;transform:scaleX(0.9716);">No specific format</div>
<div class="t" style="left:1266.17px;top:314.85px;font-size:20.29px;line-height:20.29px;font-family:'Liberation Sans', sans-serif;font-weight:700;color:#222;transform:scaleX(1.0843);">Number</div>
<div class="t" style="left:1266.57px;top:345.42px;font-size:22.57px;line-height:22.57px;font-family:'Liberation Sans', sans-serif;font-weight:400;color:#555;transform:scaleX(0.9087);">2021.00</div>
<div class="t" style="left:1266.80px;top:401.28px;font-size:20.29px;line-height:20.29px;font-family:'Liberation Sans', sans-serif;font-weight:700;color:#222;transform:scaleX(0.9914);">Currency</div>
<div class="t" style="left:1267.40px;top:431.85px;font-size:22.57px;line-height:22.57px;font-family:'Liberation Sans', sans-serif;font-weight:400;color:#555;transform:scaleX(0.8842);">$ 2,021.00</div>
<div class="t" style="left:1267.08px;top:487.71px;font-size:20.29px;line-height:20.29px;font-family:'Liberation Sans', sans-serif;font-weight:700;color:#222;transform:scaleX(1.0331);">Accounting</div>
<div class="t" style="left:1271.80px;top:518.28px;font-size:22.57px;line-height:22.57px;font-family:'Liberation Sans', sans-serif;font-weight:400;color:#555;transform:scaleX(0.8993);">$ 2,021.00</div>
<div class="t" style="left:1266.96px;top:574.14px;font-size:20.29px;line-height:20.29px;font-family:'Liberation Sans', sans-serif;font-weight:700;color:#222;transform:scaleX(1.0509);">Short Date</div>
<div class="t" style="left:1265.99px;top:604.71px;font-size:22.57px;line-height:22.57px;font-family:'Liberation Sans', sans-serif;font-weight:400;color:#555;transform:scaleX(0.9516);">13-07-1905</div>
<div class="t" style="left:1266.21px;top:660.57px;font-size:20.29px;line-height:20.29px;font-family:'Liberation Sans', sans-serif;font-weight:700;color:#222;transform:scaleX(1.0536);">Long Date</div>
<div class="t" style="left:1266.07px;top:691.14px;font-size:22.57px;line-height:22.57px;font-family:'Liberation Sans', sans-serif;font-weight:400;color:#555;transform:scaleX(0.9044);">13 July 1905</div>
<div class="t" style="left:1267.39px;top:747.00px;font-size:20.29px;line-height:20.29px;font-family:'Liberation Sans', sans-serif;font-weight:700;color:#222;transform:scaleX(1.0508);">Time</div>
<div class="t" style="left:1266.80px;top:777.57px;font-size:22.57px;line-height:22.57px;font-family:'Liberation Sans', sans-serif;font-weight:400;color:#555;transform:scaleX(0.8872);">00:00:00</div>
<div class="t" style="left:1266.24px;top:833.43px;font-size:20.29px;line-height:20.29px;font-family:'Liberation Sans', sans-serif;font-weight:700;color:#222;transform:scaleX(1.0286);">Percentage</div>
<div class="t" style="left:1266.58px;top:864.00px;font-size:22.57px;line-height:22.57px;font-family:'Liberation Sans', sans-serif;font-weight:400;color:#555;transform:scaleX(0.9005);">202100.00%</div>
<div class="t" style="left:1266.23px;top:919.86px;font-size:20.29px;line-height:20.29px;font-family:'Liberation Sans', sans-serif;font-weight:700;color:#222;transform:scaleX(1.0373);">Fraction</div>
<div class="t" style="left:1266.56px;top:950.43px;font-size:22.57px;line-height:22.57px;font-family:'Liberation Sans', sans-serif;font-weight:400;color:#555;transform:scaleX(0.9235);">2021</div>
<div class="t" style="left:1266.99px;top:1006.29px;font-size:20.29px;line-height:20.29px;font-family:'Liberation Sans', sans-serif;font-weight:700;color:#222;transform:scaleX(1.0048);">Scientific</div>
<div class="t" style="left:1266.58px;top:1036.86px;font-size:22.57px;line-height:22.57px;font-family:'Liberation Sans', sans-serif;font-weight:400;color:#555;transform:scaleX(0.9071);">2.02E+03</div>
<svg width="1536" height="1137" viewBox="0 0 1536 1137" style="left:0;top:0"><circle cx="1204.4" cy="242" r="14.5" fill="none" stroke="#7ab3d3" stroke-width="2"/><path d="M1202.5,235 V245.5 H1211" fill="none" stroke="#555" stroke-width="2"/><rect x="1189.5" y="410.2" width="47.5" height="30.3" fill="#fff" stroke="#8a8a8a" stroke-width="3.6"/><path d="M1195.5,414 V437 M1231.5,414 V437" stroke="#9a9a9a" stroke-width="2"/><ellipse cx="1213.5" cy="425.3" rx="7.5" ry="10.5" fill="none" stroke="#555" stroke-width="1.8"/><rect x="1216.0" y="428.0" width="25.0" height="24.5" rx="7" fill="#fbd48e" stroke="#e3a046" stroke-width="1.8"/><line x1="1218.5" y1="435.4" x2="1238.5" y2="435.4" stroke="#e2a04c" stroke-width="2"/><line x1="1218.5" y1="440.7" x2="1238.5" y2="440.7" stroke="#e2a04c" stroke-width="2"/><line x1="1218.5" y1="446.1" x2="1238.5" y2="446.1" stroke="#e2a04c" stroke-width="2"/><rect x="1196.5" y="488.5" width="31.5" height="47" fill="#fff" stroke="#8a8a8a" stroke-width="2.4"/><rect x="1200.5" y="492.5" width="23.5" height="8.5" fill="#a5a5a5"/><rect x="1201.4" y="505.5" width="5" height="4.5" fill="#333"/><rect x="1209.8" y="505.5" width="5" height="4.5" fill="#333"/><rect x="1219.0" y="505.5" width="5" height="4.5" fill="#333"/><rect x="1201.4" y="516.8" width="5" height="4.5" fill="#333"/><rect x="1209.8" y="516.8" width="5" height="4.5" fill="#333"/><rect x="1219.0" y="516.8" width="5" height="4.5" fill="#333"/><rect x="1201.4" y="526.6" width="5" height="4.5" fill="#333"/><rect x="1209.8" y="526.6" width="5" height="4.5" fill="#333"/><rect x="1219.0" y="526.6" width="5" height="4.5" fill="#333"/><rect x="1218.0" y="513.5" width="23.0" height="27.0" rx="7" fill="#fbd48e" stroke="#e3a046" stroke-width="1.8"/><line x1="1220.5" y1="521.6" x2="1238.5" y2="521.6" stroke="#e2a04c" stroke-width="2"/><line x1="1220.5" y1="527.5" x2="1238.5" y2="527.5" stroke="#e2a04c" stroke-width="2"/><line x1="1220.5" y1="533.5" x2="1238.5" y2="533.5" stroke="#e2a04c" stroke-width="2"/><rect x="1189" y="577.9" width="49.5" height="45.5" fill="#fff" stroke="#8a8a8a" stroke-width="2.6"/><line x1="1189" y1="586.2" x2="1238.5" y2="586.2" stroke="#8a8a8a" stroke-width="2.4"/><path d="M1197.5,573.4 V582.9 M1228.5,573.4 V582.9" stroke="#8a8a8a" stroke-width="2.4"/><circle cx="1206" cy="604.4" r="1.7" fill="#222"/><rect x="1189" y="664.3" width="49.5" height="45.5" fill="#fff" stroke="#8a8a8a" stroke-width="2.6"/><line x1="1189" y1="672.6" x2="1238.5" y2="672.6" stroke="#8a8a8a" stroke-width="2.4"/><path d="M1197.5,659.8 V669.3 M1228.5,659.8 V669.3" stroke="#8a8a8a" stroke-width="2.4"/><circle cx="1206" cy="690.8" r="1.7" fill="#222"/><circle cx="1213.8" cy="771.2" r="24.3" fill="none" stroke="#5a5a5a" stroke-width="2.2"/><path d="M1212.3,755.5 V774.4 H1228.5" fill="none" stroke="#5a5a5a" stroke-width="2.4"/><ellipse cx="1200.6" cy="846" rx="7.8" ry="8.3" fill="none" stroke="#555" stroke-width="2.2"/><ellipse cx="1226.4" cy="869.5" rx="8.3" ry="8.8" fill="none" stroke="#555" stroke-width="2.2"/><line x1="1227.5" y1="837.5" x2="1200.5" y2="879" stroke="#555" stroke-width="2"/><line x1="1227.5" y1="922.5" x2="1200.5" y2="965.5" stroke="#555" stroke-width="2"/><path d="M1503,230.5 L1509.2,219 L1515.5,230.5 Z" fill="#666"/><path d="M1503.5,1053.5 L1511,1065 L1518.5,1053.5 Z" fill="#666"/></svg>
<div class="t" style="left:1193.90px;top:250.44px;font-size:32.32px;line-height:32.32px;font-family:'Liberation Sans', sans-serif;font-weight:400;color:#333;transform:scaleX(0.8684);-webkit-text-stroke:0.6px #f2f2f2;">123</div>
<div class="t" style="left:1191.03px;top:315.29px;font-size:49.28px;line-height:49.28px;font-family:'Liberation Sans', sans-serif;font-weight:400;color:#333;transform:scaleX(0.8035);-webkit-text-stroke:1.1px #fff;">12</div>
<div class="t" style="left:1192.20px;top:917.12px;font-size:31.16px;line-height:31.16px;font-family:'Liberation Sans', sans-serif;font-weight:400;color:#444;transform:scaleX(0.8558);-webkit-text-stroke:0.5px #fff;">1</div>
<div class="t" style="left:1215.93px;top:939.40px;font-size:31.43px;line-height:31.43px;font-family:'Liberation Sans', sans-serif;font-weight:400;color:#444;transform:scaleX(1.0000);-webkit-text-stroke:0.5px #fff;">2</div>
<div class="t" style="left:1185.13px;top:1005.90px;font-size:48.55px;line-height:48.55px;font-family:'Liberation Sans', sans-serif;font-weight:400;color:#333;transform:scaleX(0.7868);-webkit-text-stroke:1.1px #fff;">10</div>
<div class="t" style="left:1227.55px;top:1001.18px;font-size:27.43px;line-height:27.43px;font-family:'Liberation Sans', sans-serif;font-weight:400;color:#444;transform:scaleX(0.9135);-webkit-text-stroke:0.4px #fff;">2</div>
<div class="b" style="left:1225.5px;top:1113.5px;width:17.0px;height:1.5px;background:#555"></div>
<div class="t" style="left:1526.12px;top:221.49px;font-size:20.69px;line-height:20.69px;font-family:'Liberation Sans', sans-serif;font-weight:400;color:#555;transform:scaleX(1.7722);">b</div>
<div class="t" style="left:1526.29px;top:251.23px;font-size:19.81px;line-height:19.81px;font-family:'Liberation Sans', sans-serif;font-weight:400;color:#666;transform:scaleX(1.7162);">r</div>
<div class="b" style="left:122.0px;top:135.5px;width:68.0px;height:3.5px;background:#1f7a4d;border-radius:2px"></div>
<div class="t" style="left:1223.30px;top:1091.88px;font-size:23.77px;line-height:23.77px;font-family:'Liberation Sans', sans-serif;font-weight:400;color:#555;transform:scaleX(0.8948);">More Number Formats...</div>
<div class="b" style="left:1152.0px;top:204.0px;width:261.0px;height:2.5px;background:#4a1416"></div>
<div class="b" style="left:90.0px;top:75.0px;width:129.0px;height:89.0px;border:6px solid #c8161e"></div>
<div class="b" style="left:1145.0px;top:197.5px;width:377.5px;height:114.0px;border:7px solid #c8161e"></div>
</body></html>
